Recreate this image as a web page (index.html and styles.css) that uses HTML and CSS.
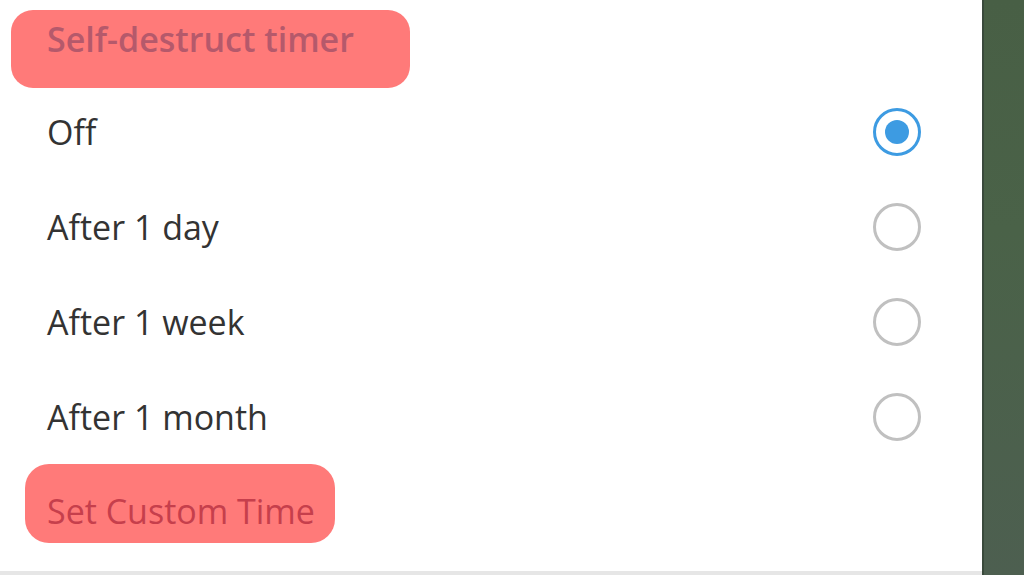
FILE: index.html
```html
<!DOCTYPE html>
<html>
<head>
<meta charset="utf-8">
<link rel="stylesheet" href="styles.css">
</head>
<body>
<div class="screen">
  <div class="panel">
    <div class="content">
      <div class="header-row"><span class="pill header-pill">Self-destruct timer</span></div>
      <div class="option"><span class="label">Off</span><span class="radio on"></span></div>
      <div class="option"><span class="label">After 1 day</span><span class="radio"></span></div>
      <div class="option"><span class="label">After 1 week</span><span class="radio"></span></div>
      <div class="option"><span class="label">After 1 month</span><span class="radio"></span></div>
      <div class="custom-row"><span class="pill custom-pill">Set Custom Time</span></div>
    </div>
    <div class="bottom-strip"></div>
  </div>
  <div class="divider"></div>
  <div class="bg"></div>
</div>
</body>
</html>
```
FILE: styles.css
```css
html, body {
  margin: 0;
  padding: 0;
  width: 1024px;
  height: 575px;
  overflow: hidden;
}
.screen {
  display: flex;
  width: 1024px;
  height: 575px;
  font-family: "Open Sans", "Noto Sans", sans-serif;
}
.panel {
  width: 982px;
  height: 575px;
  background: #ffffff;
  display: flex;
  flex-direction: column;
}
.content {
  flex: 1;
  display: flex;
  flex-direction: column;
}
.divider {
  width: 2px;
  background: #3a4a3c;
}
.bg {
  flex: 1;
  background: linear-gradient(180deg, #485f45 0%, #4a6248 40%, #4d5f50 100%);
}
.bottom-strip {
  height: 4px;
  background: #e6e6e6;
}
.pill {
  display: inline-flex;
  align-items: center;
  background: #ff7a79;
  box-sizing: border-box;
}
.header-row {
  padding: 10px 0 0 11px;
  height: 88px;
  box-sizing: border-box;
}
.header-pill {
  width: 399px;
  height: 78px;
  border-radius: 22px;
  padding: 0 0 20px 36px;
  font-size: 34px;
  font-weight: 600;
  color: #b5596b;
}
.option {
  height: 95px;
  display: flex;
  align-items: center;
  justify-content: space-between;
  padding: 0 61px 0 47px;
  margin-top: -4px;
  margin-bottom: 4px;
}
.label {
  font-size: 34px;
  color: #333333;
}
.radio {
  width: 48px;
  height: 48px;
  border-radius: 50%;
  border: 3px solid #c0c0c0;
  box-sizing: border-box;
  display: flex;
  align-items: center;
  justify-content: center;
}
.radio.on {
  border-color: #3d9be2;
}
.radio.on::after {
  content: "";
  width: 24px;
  height: 24px;
  border-radius: 50%;
  background: #3d9be2;
}
.custom-row {
  padding: 0 0 0 25px;
  margin-top: -4px;
}
.custom-pill {
  width: 310px;
  height: 79px;
  border-radius: 24px;
  padding: 14px 0 0 22px;
  font-size: 34px;
  color: #c63f4c;
}
```
